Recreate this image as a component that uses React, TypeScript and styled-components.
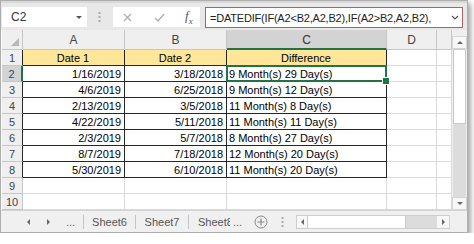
import { Fragment } from 'react';
import styled, { createGlobalStyle, css } from 'styled-components';

const GlobalStyle = createGlobalStyle`
  * { box-sizing: border-box; }
  body {
    margin: 0;
    background: #fff;
    font-family: 'Liberation Sans', Arial, sans-serif;
  }
`;

const green = '#217346';
const dark = '#262626';
const grid = '#dadada';
const headBorder = '#c6c6c6';

const Window = styled.div`
  width: 468px;
  height: 233px;
  display: flex;
  flex-direction: column;
  background: #e8e8e8;
  border: 1px solid #adadad;
  box-shadow: 3px 3px 5px rgba(0, 0, 0, 0.35);
  overflow: hidden;
`;

/* formula bar */
const FormulaBar = styled.div`
  height: 29px;
  flex: none;
  display: flex;
  align-items: flex-start;
  padding: 4px 0 0 1px;
  border-top: 2px solid #d8d8d8;
`;

const NameBox = styled.div`
  width: 85px;
  height: 20px;
  display: flex;
  align-items: center;
  justify-content: space-between;
  padding: 0 5px 0 9px;
  background: #fff;
  font-size: 12px;
  color: #333;
`;

const Grip = styled.div`
  width: 3px;
  height: 12px;
  margin: 4px 12px 0 11px;
  background: radial-gradient(circle, #a8a8a8 0.9px, transparent 1.3px) 0 0 / 3px 4px repeat-y;
`;

const FxBox = styled.div`
  width: 87px;
  height: 20px;
  display: flex;
  align-items: center;
  padding-left: 10px;
  gap: 22px;
  background: #fff;
  color: #a9a9a9;
`;

const Fx = styled.span`
  font-family: 'Liberation Serif', serif;
  font-style: italic;
  font-size: 13px;
  color: #555;
  margin-left: -2px;

  sub {
    font-size: 9px;
  }
`;

const FormulaInput = styled.div`
  width: 258px;
  height: 21px;
  margin-left: 5px;
  display: flex;
  align-items: center;
  justify-content: space-between;
  padding: 0 3px 0 4px;
  background: #fff;
  border: 1px solid #b4605e;
  font-size: 11px;
  letter-spacing: -0.2px;
  color: #222;
  white-space: nowrap;
`;

/* sheet */
const SheetArea = styled.div`
  display: flex;
  padding-left: 1px;
  background: #fff;
  height: 180px;
  flex: none;
`;

const Grid = styled.div`
  display: grid;
  grid-template-columns: 21px 102px 102px 160px 50px 15px;
  grid-template-rows: 20px repeat(10, 16px);
  font-size: 11px;
`;

const Corner = styled.div`
  background: #efefef;
  border-right: 1px solid ${headBorder};
  border-bottom: 1px solid ${headBorder};
  position: relative;

  &::after {
    content: '';
    position: absolute;
    right: 3px;
    bottom: 3px;
    border-left: 8px solid transparent;
    border-bottom: 8px solid #b8b8b8;
  }
`;

const ColHead = styled.div<{ $active?: boolean }>`
  display: flex;
  align-items: center;
  justify-content: center;
  padding-top: 1px;
  font-size: 12px;
  color: #444;
  background: #efefef;
  border-right: 1px solid ${headBorder};
  border-bottom: 1px solid ${headBorder};
  ${(p) =>
    p.$active &&
    css`
      background: #d3d3d3;
      color: #333;
      border-bottom: 2px solid ${green};
    `}
`;

const RowHead = styled.div<{ $active?: boolean; $edge?: boolean }>`
  display: flex;
  align-items: center;
  justify-content: center;
  font-size: 11px;
  color: #444;
  background: #efefef;
  border-right: 1px solid ${(p) => (p.$edge ? dark : headBorder)};
  border-bottom: 1px solid ${headBorder};
  ${(p) =>
    p.$active &&
    css`
      background: #d3d3d3;
      border-right: 2px solid ${green};
    `}
`;

const Cell = styled.div<{ $align: 'left' | 'right' | 'center'; $dark?: boolean; $fill?: boolean; $selected?: boolean }>`
  position: relative;
  display: flex;
  align-items: center;
  justify-content: ${(p) => (p.$align === 'left' ? 'flex-start' : p.$align === 'right' ? 'flex-end' : 'center')};
  padding: 1px 3px 0 2px;
  white-space: nowrap;
  color: #000;
  background: ${(p) => (p.$fill ? '#ffe699' : '#fff')};
  border-right: 1px solid ${(p) => (p.$dark ? dark : grid)};
  border-bottom: 1px solid ${(p) => (p.$dark ? dark : grid)};

  ${(p) =>
    p.$selected &&
    css`
      &::after {
        content: '';
        position: absolute;
        inset: -1px -1px -1px -1px;
        border: 2px solid ${green};
        pointer-events: none;
      }
      &::before {
        content: '';
        position: absolute;
        right: -4px;
        bottom: -4px;
        width: 6px;
        height: 6px;
        background: ${green};
        border: 1px solid #fff;
        z-index: 1;
      }
    `}
`;

const VScroll = styled.div`
  width: 15px;
  display: flex;
  flex-direction: column;
  padding-top: 6px;
  background: #efefef;
`;

const ScrollBtn = styled.div<{ $h: number }>`
  height: ${(p) => p.$h}px;
  display: flex;
  align-items: center;
  justify-content: center;
  background: #f7f7f7;
  border: 1px solid #d6d6d6;
`;

const VThumb = styled.div`
  height: 75px;
  margin: 0 1px;
  background: #fff;
  border: 1px solid #c9c9c9;
`;

const VTrack = styled.div`
  flex: 1;
  background: #dcdcdc;
  margin: 0 1px;
`;

/* tab bar */
const TabBar = styled.div`
  flex: 1;
  display: flex;
  align-items: center;
  padding-left: 17px;
  background: #f0f0f0;
  border-top: 1px solid #d2d2d2;
  font-size: 11px;
  color: #555;
`;

const NavBtn = styled.div<{ $w: number }>`
  width: ${(p) => p.$w}px;
  display: flex;
  align-items: center;
  justify-content: center;
  color: #666;
`;

const Sep = styled.div`
  width: 1px;
  height: 14px;
  background: #c4c4c4;
`;

const Tab = styled.div<{ $w: number; $clip?: boolean }>`
  width: ${(p) => p.$w}px;
  overflow: hidden;
  white-space: nowrap;
  text-align: ${(p) => (p.$clip ? 'left' : 'center')};
  padding-left: ${(p) => (p.$clip ? 9 : 0)}px;
  padding-top: 1px;
`;

const AddBtn = styled.div`
  width: 14px;
  height: 14px;
  margin-left: 9px;
  display: flex;
  align-items: center;
  justify-content: center;
`;

const TabGrip = styled(Grip)`
  margin: 0 12px 0 13px;
`;

const HScroll = styled.div`
  width: 154px;
  height: 14px;
  display: flex;
  background: #dcdcdc;
  border: 1px solid #cfcfcf;
`;

const HBtn = styled.div<{ $w: number }>`
  width: ${(p) => p.$w}px;
  display: flex;
  align-items: center;
  justify-content: center;
  background: #f7f7f7;
`;

const HThumb = styled.div`
  width: 99px;
  background: #fff;
  border: 1px solid #c9c9c9;
  border-top: none;
  border-bottom: none;
`;

const HTrack = styled.div`
  flex: 1;
`;

const Tri = ({ dir, size = 3, color = '#666' }: { dir: 'l' | 'r' | 'u' | 'd'; size?: number; color?: string }) => {
  const s = size;
  const pts =
    dir === 'l'
      ? `${s},0 ${s},${s * 2} 0,${s}`
      : dir === 'r'
        ? `0,0 0,${s * 2} ${s},${s}`
        : dir === 'u'
          ? `0,${s} ${s * 2},${s} ${s},0`
          : `0,0 ${s * 2},0 ${s},${s}`;
  const w = dir === 'l' || dir === 'r' ? s : s * 2;
  const h = dir === 'l' || dir === 'r' ? s * 2 : s;
  return (
    <svg width={w} height={h} viewBox={`0 0 ${w} ${h}`}>
      <polygon points={pts} fill={color} />
    </svg>
  );
};

const LETTERS = ['A', 'B', 'C', 'D', ''];

const titles: [string, string, string] = ['Date 1', 'Date 2', 'Difference'];

const data: [string, string, string][] = [
  ['1/16/2019', '3/18/2018', '9 Month(s) 29 Day(s)'],
  ['4/6/2019', '6/25/2018', '9 Month(s) 12 Day(s)'],
  ['2/13/2019', '3/5/2018', '11 Month(s) 8 Day(s)'],
  ['4/22/2019', '5/11/2018', '11 Month(s) 11 Day(s)'],
  ['2/3/2019', '5/7/2018', '8 Month(s) 27 Day(s)'],
  ['8/7/2019', '7/18/2018', '12 Month(s) 20 Day(s)'],
  ['5/30/2019', '6/10/2018', '11 Month(s) 20 Day(s)'],
];

export default function App() {
  return (
    <>
      <GlobalStyle />
      <Window>
        <FormulaBar>
          <NameBox>
            C2
            <Tri dir="d" size={3} color="#555" />
          </NameBox>
          <Grip />
          <FxBox>
            <svg width="9" height="9" viewBox="0 0 9 9">
              <path d="M1 1 L8 8 M8 1 L1 8" stroke="#ababab" strokeWidth="1.2" />
            </svg>
            <svg width="11" height="9" viewBox="0 0 11 9">
              <path d="M1 5 L4 8 L10 1" stroke="#ababab" strokeWidth="1.2" fill="none" />
            </svg>
            <Fx>
              f<sub>x</sub>
            </Fx>
          </FxBox>
          <FormulaInput>
            =DATEDIF(IF(A2&lt;B2,A2,B2),IF(A2&gt;B2,A2,B2),
            <svg width="8" height="5" viewBox="0 0 8 5">
              <path d="M1 1 L4 4 L7 1" stroke="#555" strokeWidth="1.2" fill="none" />
            </svg>
          </FormulaInput>
        </FormulaBar>

        <SheetArea>
          <Grid>
            <Corner />
            {LETTERS.map((l, i) => (
              <ColHead key={i} $active={l === 'C'}>
                {l}
              </ColHead>
            ))}
            {Array.from({ length: 10 }, (_, r) => {
              const rowNo = r + 1;
              const inTable = rowNo <= 8;
              const values = rowNo === 1 ? titles : rowNo <= 8 ? data[rowNo - 2] : ['', '', ''];
              return (
                <Fragment key={rowNo}>
                  <RowHead $active={rowNo === 2} $edge={inTable}>
                    {rowNo}
                  </RowHead>
                  {values.map((v, c) => (
                    <Cell
                      key={c}
                      $align={rowNo === 1 ? 'center' : c === 2 ? 'left' : 'right'}
                      $dark={inTable}
                      $fill={rowNo === 1}
                      $selected={rowNo === 2 && c === 2}
                    >
                      {v}
                    </Cell>
                  ))}
                  <Cell $align="left" />
                  <Cell $align="left" />
                </Fragment>
              );
            })}
          </Grid>
          <VScroll>
            <ScrollBtn $h={13}>
              <Tri dir="u" size={3} />
            </ScrollBtn>
            <VThumb />
            <VTrack />
            <ScrollBtn $h={13}>
              <Tri dir="d" size={3} />
            </ScrollBtn>
          </VScroll>
        </SheetArea>

        <TabBar>
          <NavBtn $w={20}>
            <Tri dir="l" size={3} />
          </NavBtn>
          <NavBtn $w={20}>
            <Tri dir="r" size={3} />
          </NavBtn>
          <NavBtn $w={25}>...</NavBtn>
          <Sep />
          <Tab $w={51}>Sheet6</Tab>
          <Sep />
          <Tab $w={52}>Sheet7</Tab>
          <Sep />
          <Tab $w={41} $clip>
            Sheet8
          </Tab>
          <NavBtn $w={15}>...</NavBtn>
          <AddBtn>
            <svg width="14" height="14" viewBox="0 0 14 14">
              <circle cx="7" cy="7" r="6" stroke="#8a8a8a" strokeWidth="1" fill="none" />
              <path d="M7 3.5 V10.5 M3.5 7 H10.5" stroke="#8a8a8a" strokeWidth="1.2" />
            </svg>
          </AddBtn>
          <TabGrip />
          <HScroll>
            <HBtn $w={10}>
              <Tri dir="l" size={3} />
            </HBtn>
            <HThumb />
            <HTrack />
            <HBtn $w={12}>
              <Tri dir="r" size={3} />
            </HBtn>
          </HScroll>
        </TabBar>
      </Window>
    </>
  );
}
